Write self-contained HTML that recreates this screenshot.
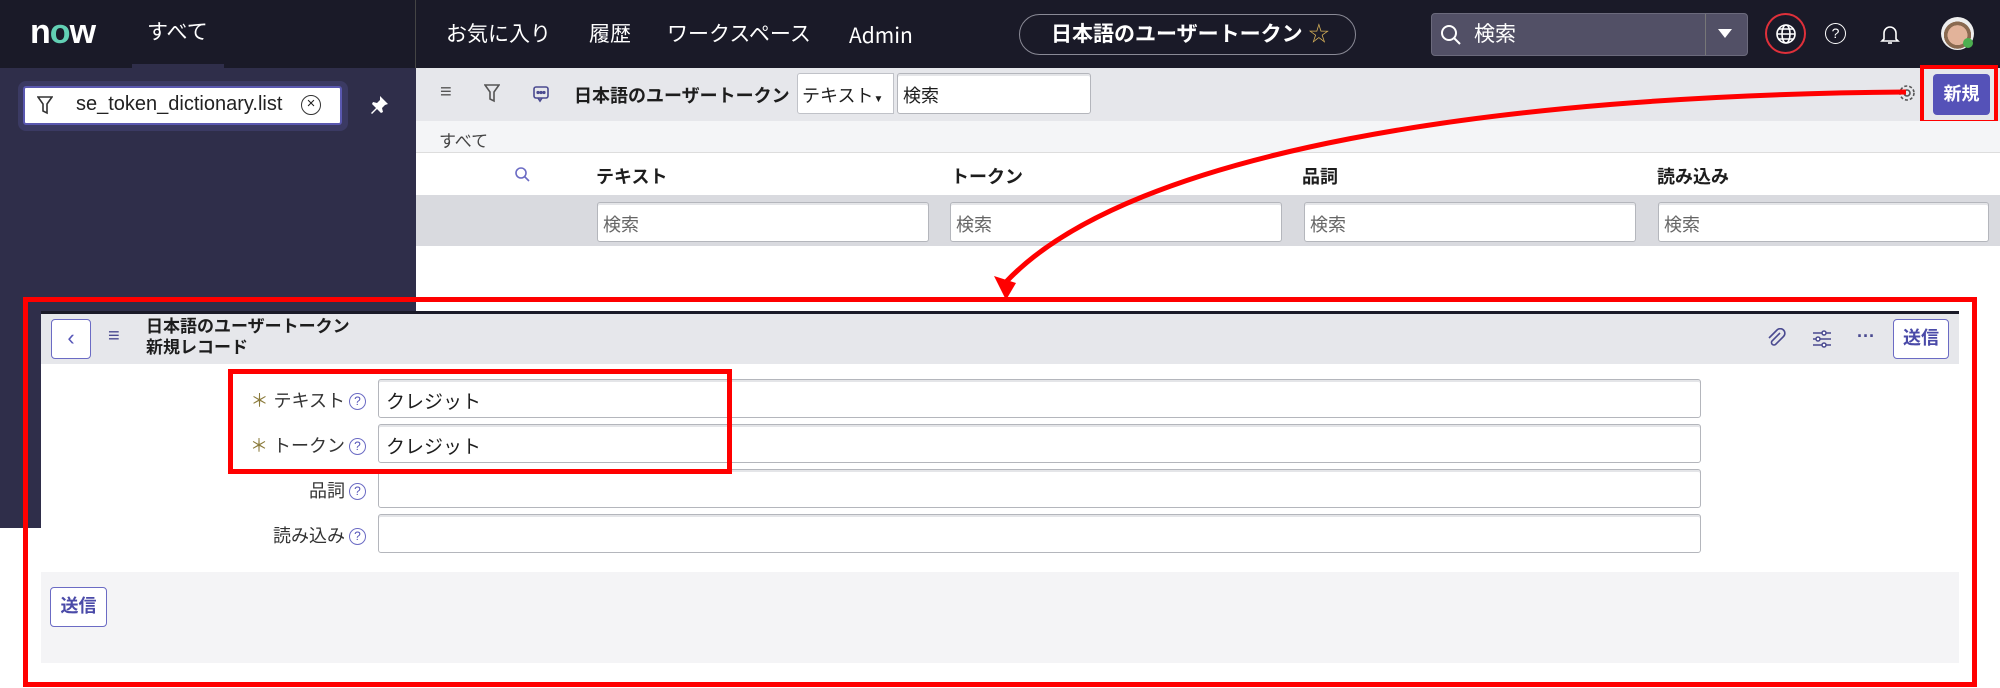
<!DOCTYPE html>
<html><head><meta charset="utf-8"><style>
*{margin:0;padding:0;box-sizing:border-box}
body{width:2000px;height:688px;overflow:hidden;background:#fff;font-family:"Liberation Sans","Noto Sans CJK JP",sans-serif;position:relative;color:#1d1d1d}
.a{position:absolute}
.hdr{left:0;top:0;width:2000px;height:68px;background:#1a1a28}
.w{color:#fff;font-size:21px;line-height:30px;height:30px}
.inp{background:#fff;border:1px solid #b4b6bc;border-radius:3px;box-shadow:inset 0 2px 0 #e4e5e8}
.ph{color:#666;font-size:18px}
.lbl{font-size:18px;color:#333;text-align:right}
.q{display:inline-block;width:17px;height:17px;border:1.5px solid #6b6bc4;border-radius:50%;color:#5555b8;font-size:12px;line-height:14px;text-align:center;vertical-align:2px;margin-left:4px}
</style></head><body>
<div class="a hdr"></div>
<div class="a" style="left:415px;top:0;width:1px;height:68px;background:#444"></div>
<div class="a" style="left:30px;top:13px;font-weight:bold;font-size:34px;color:#fff;letter-spacing:-1px">n<span style="color:#62d0b4">o</span>w</div>
<div class="a w" style="left:147px;top:18px">すべて</div>
<div class="a" style="left:132px;top:64px;width:92px;height:4px;background:#2f2e4a"></div>
<div class="a w" style="left:446px;top:20px">お気に入り</div>
<div class="a w" style="left:589px;top:20px">履歴</div>
<div class="a w" style="left:667px;top:20px">ワークスペース</div>
<div class="a w" style="left:849px;top:20px"><span style="font-family:'Noto Sans CJK JP',sans-serif">Admin</span></div>
<div class="a" style="left:1019px;top:14px;width:337px;height:41px;border:1.5px solid #8a8a96;border-radius:21px"></div>
<div class="a w" style="left:1051px;top:20px;font-weight:bold">日本語のユーザートークン <span style="color:#d9b35a;font-weight:normal">☆</span></div>
<div class="a" style="left:1431px;top:13px;width:317px;height:43px;background:#525066;border:1px solid #6b6a7c;border-radius:4px"></div>
<div class="a" style="left:1705px;top:14px;width:1px;height:41px;background:#777"></div>
<svg class="a" style="left:1440px;top:24px" width="22" height="22"><circle cx="9" cy="9" r="7" fill="none" stroke="#fff" stroke-width="2"/><line x1="14" y1="14" x2="20" y2="20" stroke="#fff" stroke-width="2"/></svg>
<div class="a w" style="left:1474px;top:20px">検索</div>
<div class="a" style="left:1718px;top:29px;border-left:7px solid transparent;border-right:7px solid transparent;border-top:9px solid #fff"></div>
<div class="a" style="left:1765px;top:13px;width:41px;height:41px;border:2px solid #e0303a;border-radius:50%"></div>
<svg class="a" style="left:1774px;top:22px" width="24" height="24" fill="none" stroke="#fff" stroke-width="1.6"><circle cx="12" cy="12" r="9"/><ellipse cx="12" cy="12" rx="4" ry="9"/><line x1="3" y1="12" x2="21" y2="12"/><path d="M5 7h14M5 17h14"/></svg>
<div class="a" style="left:1825px;top:23px;width:21px;height:21px;border:1.6px solid #fff;border-radius:50%;color:#fff;font-size:14px;text-align:center;line-height:18px">?</div>
<svg class="a" style="left:1880px;top:23px" width="20" height="22" fill="none" stroke="#fff" stroke-width="1.6"><path d="M4 16V10a6 6 0 0 1 12 0v6l2 2H2z"/><path d="M8 20h4"/></svg>
<div class="a" style="left:1941px;top:17px;width:33px;height:33px;border-radius:50%;background:radial-gradient(circle at 50% 55%,#e2b39a 0 40%,#8a6a50 41% 55%,#eee 56%)"></div>
<div class="a" style="left:1963px;top:38px;width:10px;height:10px;border-radius:50%;background:#4caf50"></div>
<!-- sidebar -->
<div class="a" style="left:0;top:68px;width:416px;height:460px;background:#2f2e4a"></div>
<div class="a" style="left:18px;top:81px;width:330px;height:50px;border-radius:8px;background:#3b3a63"></div>
<div class="a" style="left:23px;top:86px;width:319px;height:39px;background:#fff;border:2px solid #5a58b0;border-radius:3px"></div>
<svg class="a" style="left:37px;top:95px" width="16" height="20" fill="none" stroke="#333" stroke-width="1.6"><path d="M1 2h14L10 9v9l-4-2V9z"/></svg>
<div class="a" style="left:76px;top:93px;font-size:20px;color:#222">se_token_dictionary.list</div>
<div class="a" style="left:301px;top:95px;width:20px;height:20px;border:1.6px solid #333;border-radius:50%;font-size:15px;line-height:16px;text-align:center">×</div>
<svg class="a" style="left:369px;top:95px" width="20" height="20" fill="#fff"><path d="M11 1l8 8-3 1-3 3 1 4-2 1-4-4-5 5-1-1 5-5-4-4 1-2 4 1 3-3z"/></svg>
<!-- list toolbar -->
<div class="a" style="left:416px;top:68px;width:1584px;height:53px;background:#e6e7eb"></div>
<div class="a" style="left:440px;top:81px;font-size:20px;color:#555">≡</div>
<svg class="a" style="left:484px;top:83px" width="16" height="20" fill="none" stroke="#555" stroke-width="1.6"><path d="M1 2h14L10 9v9l-4-2V9z"/></svg>
<svg class="a" style="left:532px;top:85px" width="18" height="18" fill="none" stroke="#4a4a90" stroke-width="1.6"><rect x="2" y="2" width="14" height="11" rx="2"/><path d="M6 13l2 3 2-3"/><circle cx="6" cy="7.5" r=".8" fill="#4a4a90"/><circle cx="9" cy="7.5" r=".8" fill="#4a4a90"/><circle cx="12" cy="7.5" r=".8" fill="#4a4a90"/></svg>
<div class="a" style="left:574px;top:82px;font-size:18px;font-weight:bold">日本語のユーザートークン</div>
<div class="a" style="left:797px;top:73px;width:97px;height:41px;background:#fff;border:1px solid #c0c2c8;border-radius:3px 0 0 3px;font-size:18px;padding:8px 4px">テキスト<span style="font-size:10px">▼</span></div>
<div class="a inp" style="left:897px;top:73px;width:194px;height:41px;font-size:18px;padding:8px 5px">検索</div>
<svg class="a" style="left:1897px;top:83px" width="20" height="20" fill="none" stroke="#555" stroke-width="1.6"><circle cx="10" cy="10" r="3"/><circle cx="10" cy="10" r="7" stroke-dasharray="3 2"/></svg>
<div class="a" style="left:1933px;top:74px;width:57px;height:41px;background:#5552b8;border-radius:4px;color:#fff;font-weight:bold;font-size:18px;text-align:center;line-height:41px">新規</div>
<div class="a" style="left:1920px;top:65px;width:78px;height:59px;border:4px solid #f00"></div>
<div class="a" style="left:416px;top:121px;width:1584px;height:32px;background:#f4f5f7;border-bottom:1px solid #ddd"></div>
<div class="a" style="left:439px;top:127px;font-size:17px;color:#444">すべて</div>
<svg class="a" style="left:514px;top:166px" width="18" height="18" fill="none" stroke="#6b6bc4" stroke-width="1.6"><circle cx="7" cy="7" r="5"/><line x1="11" y1="11" x2="15" y2="15"/></svg>
<div class="a" style="left:596px;top:163px;font-size:18px;font-weight:bold">テキスト</div>
<div class="a" style="left:951px;top:163px;font-size:18px;font-weight:bold">トークン</div>
<div class="a" style="left:1302px;top:163px;font-size:18px;font-weight:bold">品詞</div>
<div class="a" style="left:1657px;top:163px;font-size:18px;font-weight:bold">読み込み</div>
<div class="a" style="left:416px;top:195px;width:1584px;height:51px;background:#d9dadf"></div>
<div class="a inp ph" style="left:597px;top:202px;width:332px;height:40px;padding:8px 5px">検索</div>
<div class="a inp ph" style="left:950px;top:202px;width:332px;height:40px;padding:8px 5px">検索</div>
<div class="a inp ph" style="left:1304px;top:202px;width:332px;height:40px;padding:8px 5px">検索</div>
<div class="a inp ph" style="left:1658px;top:202px;width:331px;height:40px;padding:8px 5px">検索</div>
<!-- form -->
<div class="a" style="left:41px;top:311px;width:1918px;height:3px;background:#1a1a28"></div>
<div class="a" style="left:41px;top:314px;width:1918px;height:50px;background:#e6e7eb"></div>
<div class="a" style="left:41px;top:364px;width:1918px;height:208px;background:#fff"></div>
<div class="a" style="left:51px;top:319px;width:40px;height:40px;border:1.5px solid #6b6bc4;border-radius:4px;background:#fff;color:#5555b8;font-size:22px;text-align:center;line-height:36px">‹</div>
<div class="a" style="left:108px;top:325px;font-size:20px;color:#4a4a90">≡</div>
<div class="a" style="left:146px;top:316px;font-size:17px;font-weight:bold;line-height:21px">日本語のユーザートークン<br>新規レコード</div>
<svg class="a" style="left:1766px;top:328px" width="20" height="22" fill="none" stroke="#4a4a90" stroke-width="1.6"><path d="M14 5l-8 8a2.5 2.5 0 0 0 3.5 3.5l8-8a4.5 4.5 0 0 0-6.5-6.5l-8 8"/></svg>
<svg class="a" style="left:1812px;top:330px" width="20" height="18" fill="none" stroke="#4a4a90" stroke-width="1.5"><path d="M1 3h18M1 9h18M1 15h18"/><circle cx="12" cy="3" r="2" fill="#fff"/><circle cx="6" cy="9" r="2" fill="#fff"/><circle cx="12" cy="15" r="2" fill="#fff"/></svg>
<div class="a" style="left:1857px;top:326px;font-size:18px;color:#4a4a90;font-weight:bold">···</div>
<div class="a" style="left:1893px;top:319px;width:56px;height:40px;border:1.5px solid #6b6bc4;border-radius:4px;background:#fff;color:#4a4aa8;font-weight:bold;font-size:18px;text-align:center;line-height:37px">送信</div>
<div class="a lbl" style="left:200px;top:387px;width:166px"><span style="color:#8a7a3a">＊</span> テキスト<span class="q">?</span></div>
<div class="a lbl" style="left:200px;top:432px;width:166px"><span style="color:#8a7a3a">＊</span> トークン<span class="q">?</span></div>
<div class="a lbl" style="left:200px;top:477px;width:166px">品詞<span class="q">?</span></div>
<div class="a lbl" style="left:200px;top:522px;width:166px">読み込み<span class="q">?</span></div>
<div class="a inp" style="left:378px;top:379px;width:1323px;height:39px;font-size:19px;padding:7px 7px">クレジット</div>
<div class="a inp" style="left:378px;top:424px;width:1323px;height:39px;font-size:19px;padding:7px 7px">クレジット</div>
<div class="a inp" style="left:378px;top:469px;width:1323px;height:39px"></div>
<div class="a inp" style="left:378px;top:514px;width:1323px;height:39px"></div>
<div class="a" style="left:41px;top:572px;width:1918px;height:91px;background:#f4f4f6"></div>
<div class="a" style="left:50px;top:587px;width:57px;height:40px;border:1.5px solid #6b6bc4;border-radius:4px;background:#fff;color:#4a4aa8;font-weight:bold;font-size:18px;text-align:center;line-height:37px">送信</div>
<div class="a" style="left:228px;top:369px;width:504px;height:105px;border:5px solid #f00"></div>
<div class="a" style="left:23px;top:297px;width:1954px;height:390px;border:5px solid #f00"></div>
<svg class="a" style="left:0;top:0" width="2000" height="688"><path d="M1906 92 C1500 95 1130 150 1006 282" fill="none" stroke="#f00" stroke-width="5"/><path d="M994 276 L1006 300 L1016 283 Z" fill="#f00"/></svg>
</body></html>
